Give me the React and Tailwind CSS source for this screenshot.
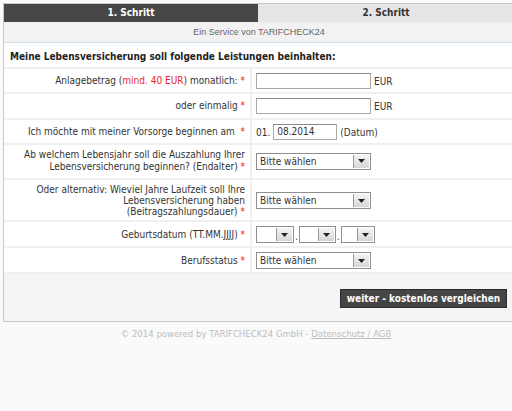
const ff = { fontFamily: '"DejaVu Sans Condensed", "DejaVu Sans", Verdana, sans-serif', fontStretch: 'condensed' };

function Star() {
  return <span className="text-[#e5262b]"> *</span>;
}

function Arrow() {
  return (
    <span className="flex h-full w-[16px] items-center justify-center border-l border-[#9a9a9a] bg-gradient-to-b from-[#f4f4f4] to-[#d6d6d6]">
      <svg width="7" height="4" viewBox="0 0 7 4"><path d="M0 0h7L3.5 4z" fill="#222" /></svg>
    </span>
  );
}

function Select({ text = 'Bitte wählen', className = 'w-[115px]' }) {
  return (
    <div className={`flex h-[17px] ${className} items-stretch border border-[#8f8f8f] bg-white`}>
      <span className="flex-1 truncate pl-[3px] text-[10px] leading-[15px] text-[#333]">{text}</span>
      <div className="p-px">
        <Arrow />
      </div>
    </div>
  );
}

function TextInput({ w = 'w-[115px]', value = '' }) {
  return (
    <div className={`h-[16px] ${w} border border-[#a8a8a8] border-t-[#8a8a8a] bg-white pl-[3px] text-[10px] leading-[14px] text-[#333]`}>
      {value}
    </div>
  );
}

function Row({ label, children, pad = 'pt-[4px] pb-[3px]' }) {
  return (
    <div className="grid grid-cols-[248px_1fr] border-b-2 border-[#f0f0f0]">
      <div className={`flex items-center justify-end border-r-2 border-[#f0f0f0] ${pad} pr-[5px] text-right text-[10px] leading-[12px] text-[#333]`}>
        <div>{label}</div>
      </div>
      <div className={`flex items-center gap-[3px] ${pad} pl-[4px] text-[10px] text-[#333]`}>{children}</div>
    </div>
  );
}

export default function App() {
  return (
    <div className="min-h-[411px] w-[512px] overflow-hidden bg-[#fafafa] pt-[3px] pl-[3px]" style={ff}>
      <div className="w-[520px] border border-[#c8c8c8]">
        <div className="flex h-[18px] text-[10px] font-bold leading-[18px]">
          <div className="w-[254px] bg-[#474747] text-center text-white">1. Schritt</div>
          <div className="flex-1 bg-[#e6e6e6] pr-[8px] text-center text-[#333]">2. Schritt</div>
        </div>
        <div
          className="h-[21px] border-b border-[#cfe3f3] bg-[#f2f2f2] pr-[8px] text-center text-[9px] leading-[21px] text-[#666]"
          style={{ fontFamily: '"Liberation Sans", Arial, sans-serif', fontStretch: 'normal' }}
        >
          Ein Service von TARIFCHECK24
        </div>
        <div className="bg-white">
          <div className="border-b-2 border-[#f0f0f0] pl-[6px] pt-[8px] pb-[4px] text-[10px] font-bold leading-[12px] text-[#222]">
            Meine Lebensversicherung soll folgende Leistungen beinhalten:
          </div>
          <Row label={<>Anlagebetrag (<span className="text-[#e5262b]">mind. 40 EUR</span>) monatlich:<Star /></>}>
            <TextInput />
            <span>EUR</span>
          </Row>
          <Row label={<>oder einmalig<Star /></>} pad="pt-[4px] pb-[4px]">
            <TextInput />
            <span>EUR</span>
          </Row>
          <Row label={<>Ich möchte mit meiner Vorsorge beginnen am&nbsp;<Star /></>}>
            <span>01.</span>
            <TextInput w="w-[64px]" value="08.2014" />
            <span>(Datum)</span>
          </Row>
          <Row label={<>Ab welchem Lebensjahr soll die Auszahlung Ihrer<br />Lebensversicherung beginnen? (Endalter)<Star /></>} pad="pt-[4px] pb-[5px]">
            <Select />
          </Row>
          <Row label={<span className="block leading-[11px]">Oder alternativ: Wieviel Jahre Laufzeit soll Ihre<br />Lebensversicherung haben<br />(Beitragszahlungsdauer)<Star /></span>}>
            <Select />
          </Row>
          <Row label={<>Geburtsdatum (TT.MM.JJJJ)<Star /></>}>
            <div className="flex items-end gap-[1px]">
              <Select text="" className="w-[38px]" />
              <span className="leading-[12px]">.</span>
              <Select text="" className="w-[37px]" />
              <span className="leading-[12px]">.</span>
              <Select text="" className="w-[34px]" />
            </div>
          </Row>
          <Row label={<>Berufsstatus<Star /></>}>
            <Select />
          </Row>
        </div>
        <div className="flex justify-end bg-[#f5f5f5] pt-[15px] pb-[13px] pr-[15px]">
          <button className="h-[19px] w-[167px] whitespace-nowrap border border-[#2a2a2a] bg-[#454545] text-[10px] font-bold leading-[17px] text-white">
            weiter - kostenlos vergleichen
          </button>
        </div>
      </div>
      <div className="mt-[5px] pr-[3px] text-center text-[9.5px] text-[#bdbdbd]">
        © 2014 powered by TARIFCHECK24 GmbH - <span className="underline">Datenschutz / AGB</span>
      </div>
    </div>
  );
}
